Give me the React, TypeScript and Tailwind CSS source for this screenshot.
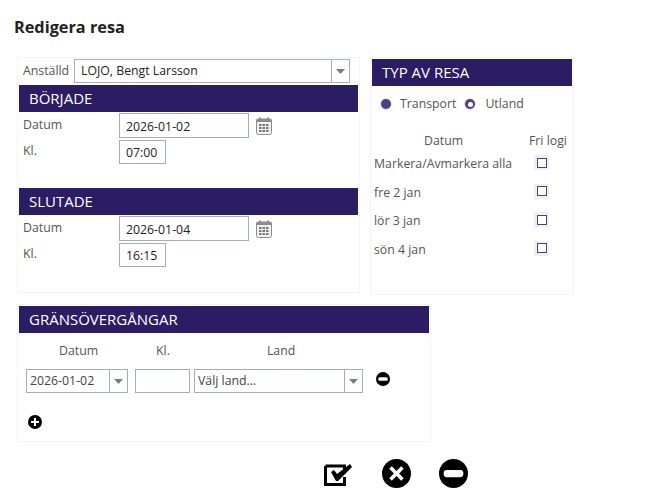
import React from "react";

const font = "font-['Open_Sans','Noto_Sans',sans-serif]";

function SectionHeader({ title }: { title: string }) {
  return (
    <div className="h-[27px] bg-[#2b1c63] pl-[10px] text-[15px] leading-[27px] text-white">
      {title}
    </div>
  );
}

function DropArrow() {
  return (
    <span className="flex h-full w-[18px] shrink-0 items-center justify-center border-l border-[#a5acbd]">
      <svg width="9" height="5" viewBox="0 0 9 5">
        <path d="M0 0h9L4.500 5z" fill="#7b7b7b" />
      </svg>
    </span>
  );
}

function CalendarIcon() {
  return (
    <svg width="16" height="18" viewBox="0 0 16 18" className="ml-[7px]">
      <rect x="0.500" y="2" width="15" height="15.500" rx="2" fill="#f3f3f3" stroke="#8c8c8c" />
      <rect x="0.500" y="2" width="15" height="3" fill="#8c8c8c" />
      <rect x="3" y="0.500" width="2" height="3" fill="#8c8c8c" />
      <rect x="11" y="0.500" width="2" height="3" fill="#8c8c8c" />
      {[3, 6.500, 10].map((x) =>
        [7, 10, 13].map((y) => (
          <rect key={`${x}-${y}`} x={x} y={y} width="2.500" height="2" fill="#777" />
        ))
      )}
    </svg>
  );
}

function TimeBlock({ date, time }: { date: string; time: string }) {
  return (
    <div className="pt-px">
      <div className="flex h-[25px] items-center">
        <span className="w-[100px] pb-[1px] pl-1 text-[#555]">Datum</span>
        <div className="h-[25px] w-[130px] border border-[#a5acbd] pl-[6px] leading-[25px] text-[#222]">
          {date}
        </div>
        <CalendarIcon />
      </div>
      <div className="mt-px flex h-[25px] items-center">
        <span className="w-[100px] pl-1 text-[#555]">Kl.</span>
        <div className="h-[24px] w-[47px] border border-[#a5acbd] pl-[6px] leading-[24px] text-[#222]">
          {time}
        </div>
      </div>
    </div>
  );
}

function CheckRow({ label }: { label: string }) {
  return (
    <div className="flex h-[28.500px] items-center text-[#555]">
      <span className="w-[162px] pl-[2px]">{label}</span>
      <span className="mb-[3px] flex size-[15px] items-center justify-center bg-[#f0eff4]">
        <span className="size-[10px] border border-[#4a3f7f] bg-white" />
      </span>
    </div>
  );
}

function MinusIcon({ size }: { size: number }) {
  return (
    <svg width={size} height={size} viewBox="0 0 28 28">
      <circle cx="14" cy="14" r="14" fill="#000" />
      <rect x="4.500" y="10.500" width="19" height="7" rx="3" fill="#fff" />
    </svg>
  );
}

export default function App() {
  return (
    <div className={`${font} h-[493px] w-[664px] overflow-hidden bg-white pl-[17px] text-[12.300px] leading-none`}>
      <h1 className="-ml-[3px] h-[57px] pt-[18px] text-[16.300px] leading-[18px] font-bold text-[#222]">Redigera resa</h1>

      <div className="flex items-start gap-[10px]">
        {/* left panel */}
        <div className="h-[236px] w-[343px] border border-[#f5f5f0] px-px pt-px">
          <div className="flex h-[26px] items-start">
            <span className="w-[55px] pt-[6px] pl-1 text-[#555]">Anställd</span>
            <div className="flex h-[24px] w-[276px] items-center border border-[#a5acbd] pl-[6px] text-[#222]">
              <span className="flex-1">LOJO, Bengt Larsson</span>
              <DropArrow />
            </div>
          </div>
          <SectionHeader title="BÖRJADE" />
          <TimeBlock date="2026-01-02" time="07:00" />
          <div className="mt-[24px]">
            <SectionHeader title="SLUTADE" />
            <TimeBlock date="2026-01-04" time="16:15" />
          </div>
        </div>

        {/* right panel */}
        <div className="h-[238px] w-[204px] border border-[#f5f5f0] px-px pt-px">
          <SectionHeader title="TYP AV RESA" />
          <div className="flex h-[36px] items-center pl-[9px] text-[#555]">
            <span className="size-[10px] rounded-full bg-[#4f4180] shadow-[0_0_0_1px_#e6e3ee]" />
            <span className="ml-[9px]">Transport</span>
            <span className="ml-[9px] flex size-[10px] items-center justify-center rounded-full bg-[#4f4180] shadow-[0_0_0_1px_#e6e3ee]">
              <span className="size-[5px] rounded-full bg-white" />
            </span>
            <span className="ml-[10px]">Utland</span>
          </div>
          <div className="flex h-[28px] items-end pb-[3px] text-[#555]">
            <span className="w-[157px] pl-[52px]">Datum</span>
            <span>Fri logi</span>
          </div>
          <CheckRow label="Markera/Avmarkera alla" />
          <CheckRow label="fre 2 jan" />
          <CheckRow label="lör 3 jan" />
          <CheckRow label="sön 4 jan" />
        </div>
      </div>

      {/* border crossings */}
      <div className="mt-[9px] h-[138px] w-[414px] border border-[#f5f5f0] px-px pt-px">
        <SectionHeader title="GRÄNSÖVERGÅNGAR" />
        <div className="flex h-[36px] items-center text-[#555]">
          <span className="ml-[40px]">Datum</span>
          <span className="ml-[58px]">Kl.</span>
          <span className="ml-[97px]">Land</span>
        </div>
        <div className="flex items-start pl-[7px]">
          <div className="flex h-[24px] w-[102px] items-center border border-[#a5acbd] pl-[3px] text-[#444]">
            <span className="flex-1">2026-01-02</span>
            <DropArrow />
          </div>
          <div className="ml-[7px] h-[24px] w-[55px] border border-[#a5acbd]" />
          <div className="ml-[4px] flex h-[24px] w-[169px] items-center border border-[#a5acbd] pl-[3px] text-[#444]">
            <span className="flex-1">Välj land...</span>
            <DropArrow />
          </div>
          <span className="mt-[3px] ml-[13px]">
            <MinusIcon size={14} />
          </span>
        </div>
        <div className="mt-[22px] pl-[9px]">
          <svg width="14" height="14" viewBox="0 0 14 14">
            <circle cx="7" cy="7" r="7" fill="#000" />
            <path d="M6 3h2v3h3v2H8v3H6V8H3V6h3z" fill="#fff" />
          </svg>
        </div>
      </div>

      {/* actions */}
      <div className="mt-[17px] flex items-center pl-[307px]">
        <svg width="29" height="24" viewBox="0 0 29 24">
          <path d="M1.500 4h19v4M20.500 15v7.500h-19V4" fill="none" stroke="#000" strokeWidth="3" />
          <path d="M7 10l3-2 3 4L26 2l2 3-14 14h-2z" fill="#000" />
        </svg>
        <svg width="29" height="29" viewBox="0 0 28 28" className="ml-[29px]">
          <circle cx="14" cy="14" r="14" fill="#000" />
          <path d="M9.500 7l4.500 4.500L18.500 7l2.500 2.500-4.500 4.500 4.500 4.500-2.500 2.500-4.500-4.500L9.500 21 7 18.500l4.500-4.500L7 9.500z" fill="#fff" />
        </svg>
        <span className="ml-[28px]">
          <MinusIcon size={29} />
        </span>
      </div>
    </div>
  );
}
